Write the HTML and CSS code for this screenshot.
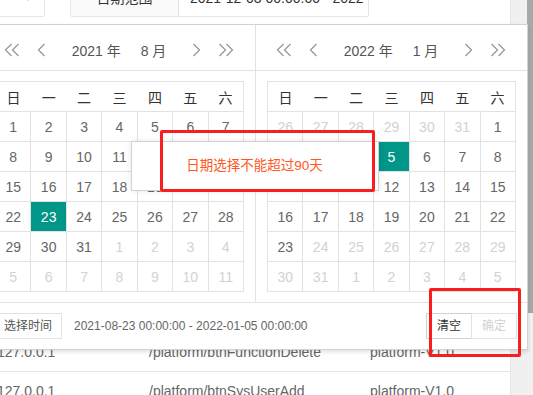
FILE: index.html
```html
<!DOCTYPE html>
<html lang="zh-CN">
<head>
    <meta charset="UTF-8">
    <title>操作日志</title>
    <link rel="stylesheet" href="styles.css">
</head>
<body>
    <div class="page">
        <div class="card">
            <div class="search">
                <div class="select"><span class="caret"></span></div>
                <div class="field">
                    <div class="field-label">日期范围</div>
                    <div class="field-input">2021-12-03 00:00:00 - 2022-01-05 00:00:00</div>
                </div>
            </div>

            <table class="log">
                <colgroup><col style="width: 152px"><col style="width: 221px"><col></colgroup>
                <tr><td>IP地址</td><td>请求地址</td><td>服务</td></tr>
                <tr><td>127.0.0.1</td><td>/platform/btnSysRoleEdit</td><td>platform-V1.0</td></tr>
                <tr><td>127.0.0.1</td><td>/platform/btnSysRoleAdd</td><td>platform-V1.0</td></tr>
                <tr><td>127.0.0.1</td><td>/platform/btnMenuEdit</td><td>platform-V1.0</td></tr>
                <tr><td>127.0.0.1</td><td>/platform/btnMenuAdd</td><td>platform-V1.0</td></tr>
                <tr><td>127.0.0.1</td><td>/platform/btnFunctionEdit</td><td>platform-V1.0</td></tr>
                <tr><td>127.0.0.1</td><td>/platform/btnFunctionAdd</td><td>platform-V1.0</td></tr>
                <tr><td>127.0.0.1</td><td>/platform/btnFunctionDelete</td><td>platform-V1.0</td></tr>
                <tr><td>127.0.0.1</td><td>/platform/btnSysUserAdd</td><td>platform-V1.0</td></tr>
            </table>
        </div>
        <div class="gutter"></div>
        <div class="scrollbar"><div class="thumb"></div></div>
    </div>

    <!-- date range picker -->
    <div class="laydate">
        <div class="laydate-mains">
            <div class="laydate-main">
                <div class="laydate-header">
                    <svg class="arrow" width="16" height="14" viewBox="0 0 16 14"><path d="M7.5 1 L1.5 7 L7.5 13 M14.5 1 L8.5 7 L14.5 13"/></svg>
                    <svg class="arrow arrow-m" width="9" height="14" viewBox="0 0 9 14"><path d="M7.5 1 L1.5 7 L7.5 13"/></svg>
                    <div class="laydate-title"><span>2021 年</span><span>8 月</span></div>
                    <svg class="arrow" width="9" height="14" viewBox="0 0 9 14"><path d="M1.5 1 L7.5 7 L1.5 13"/></svg>
                    <svg class="arrow arrow-y" width="16" height="14" viewBox="0 0 16 14"><path d="M1.5 1 L7.5 7 L1.5 13 M8.5 1 L14.5 7 L8.5 13"/></svg>
                </div>
                <div class="laydate-content">
                    <table>
                        <tr><th>日</th><th>一</th><th>二</th><th>三</th><th>四</th><th>五</th><th>六</th></tr>
                        <tr><td>1</td><td>2</td><td>3</td><td>4</td><td>5</td><td>6</td><td>7</td></tr>
                        <tr><td>8</td><td>9</td><td>10</td><td>11</td><td>12</td><td>13</td><td>14</td></tr>
                        <tr><td>15</td><td>16</td><td>17</td><td>18</td><td>19</td><td>20</td><td>21</td></tr>
                        <tr><td>22</td><td class="on">23</td><td>24</td><td>25</td><td>26</td><td>27</td><td>28</td></tr>
                        <tr><td>29</td><td>30</td><td>31</td><td class="off">1</td><td class="off">2</td><td class="off">3</td><td class="off">4</td></tr>
                        <tr><td class="off">5</td><td class="off">6</td><td class="off">7</td><td class="off">8</td><td class="off">9</td><td class="off">10</td><td class="off">11</td></tr>
                    </table>
                </div>
            </div>
            <div class="laydate-main">
                <div class="laydate-header">
                    <svg class="arrow" width="16" height="14" viewBox="0 0 16 14"><path d="M7.5 1 L1.5 7 L7.5 13 M14.5 1 L8.5 7 L14.5 13"/></svg>
                    <svg class="arrow arrow-m" width="9" height="14" viewBox="0 0 9 14"><path d="M7.5 1 L1.5 7 L7.5 13"/></svg>
                    <div class="laydate-title"><span>2022 年</span><span>1 月</span></div>
                    <svg class="arrow" width="9" height="14" viewBox="0 0 9 14"><path d="M1.5 1 L7.5 7 L1.5 13"/></svg>
                    <svg class="arrow arrow-y" width="16" height="14" viewBox="0 0 16 14"><path d="M1.5 1 L7.5 7 L1.5 13 M8.5 1 L14.5 7 L8.5 13"/></svg>
                </div>
                <div class="laydate-content">
                    <table>
                        <tr><th>日</th><th>一</th><th>二</th><th>三</th><th>四</th><th>五</th><th>六</th></tr>
                        <tr><td class="off">26</td><td class="off">27</td><td class="off">28</td><td class="off">29</td><td class="off">30</td><td class="off">31</td><td>1</td></tr>
                        <tr><td>2</td><td>3</td><td>4</td><td class="on">5</td><td>6</td><td>7</td><td>8</td></tr>
                        <tr><td>9</td><td>10</td><td>11</td><td>12</td><td>13</td><td>14</td><td>15</td></tr>
                        <tr><td>16</td><td>17</td><td>18</td><td>19</td><td>20</td><td>21</td><td>22</td></tr>
                        <tr><td>23</td><td class="off">24</td><td class="off">25</td><td class="off">26</td><td class="off">27</td><td class="off">28</td><td class="off">29</td></tr>
                        <tr><td class="off">30</td><td class="off">31</td><td class="off">1</td><td class="off">2</td><td class="off">3</td><td class="off">4</td><td class="off">5</td></tr>
                    </table>
                </div>
            </div>
        </div>
        <div class="laydate-footer">
            <span class="btn btn-time">选择时间</span>
            <span class="range">2021-08-23 00:00:00 - 2022-01-05 00:00:00</span>
            <div class="btns">
                <span class="btn">清空</span>
                <span class="btn btn-disabled">确定</span>
            </div>
        </div>
        <div class="laydate-hint">日期选择不能超过90天</div>
    </div>

    <div class="mark mark-hint"></div>
    <div class="mark mark-btns"></div>
</body>
</html>
```

FILE: styles.css
```css
body {
    margin: 0;
    width: 533px;
    height: 395px;
    overflow: hidden;
    font-family: "Liberation Sans", "Noto Sans CJK SC", sans-serif;
    font-size: 14px;
    color: #666;
    background: #fff;
}
.page {
    display: flex;
    height: 395px;
}
.card {
    flex: none;
    width: 528px;
    margin-left: -18px;
    border-right: 1px solid #e6e6e6;
}
.gutter {
    flex: 1;
    background: #f0f0f0;
}
.scrollbar {
    width: 6px;
    background: #f1f1f1;
}
.thumb {
    height: 313px;
    background: #a8a8a8;
}

/* search form, scrolled mostly out of view */
.search {
    display: flex;
    margin-top: -21px;
    height: 38px;
}
.select {
    display: flex;
    align-items: center;
    justify-content: flex-end;
    width: 63px;
    padding-right: 10px;
    box-sizing: border-box;
    border: 1px solid #e6e6e6;
    border-radius: 2px;
}
.caret {
    width: 0;
    height: 0;
    border-left: 6px solid transparent;
    border-right: 6px solid transparent;
    border-top: 6px solid #c2c2c2;
}
.field {
    display: flex;
    margin-left: 25px;
}
.field-label {
    width: 109px;
    box-sizing: border-box;
    padding: 8px 0;
    line-height: 20px;
    text-align: center;
    color: #333;
    background: #fafafa;
    border: 1px solid #e6e6e6;
    border-radius: 2px 0 0 2px;
}
.field-input {
    width: 190px;
    box-sizing: border-box;
    padding: 8px 11px;
    line-height: 20px;
    color: #333;
    white-space: nowrap;
    overflow: hidden;
    border: 1px solid #e6e6e6;
    border-left: 0;
    border-radius: 0 2px 2px 0;
}

.log {
    margin-top: 43px;
    width: 528px;
    border-collapse: collapse;
    table-layout: fixed;
}
.log td {
    padding: 9px 15px;
    line-height: 20px;
    white-space: nowrap;
    overflow: hidden;
    border-bottom: 1px solid #e6e6e6;
}

/* laydate range popup */
.laydate {
    position: absolute;
    top: 24px;
    left: -17px;
    width: 543px;
    background: #fff;
    border: 1px solid #d2d2d2;
    box-shadow: 0 2px 4px rgba(0, 0, 0, .12);
}
.laydate-mains {
    display: flex;
}
.laydate-main {
    width: 271px;
}
.laydate-main + .laydate-main {
    border-left: 1px solid #e2e2e2;
}
.laydate-header {
    display: flex;
    align-items: center;
    height: 30px;
    padding: 10px 21px 5px 20px;
    border-bottom: 1px solid #e2e2e2;
    color: #555;
}
.arrow {
    flex: none;
    fill: none;
    stroke: #999;
    stroke-width: 1.3;
}
.arrow-m {
    margin-left: 17px;
}
.arrow-y {
    margin-left: 17px;
}
.laydate-title {
    flex: 1;
    display: flex;
    justify-content: center;
    gap: 20px;
    white-space: nowrap;
}
.laydate-content {
    padding: 10px 11px;
}
.laydate-content table {
    width: 100%;
    border-collapse: collapse;
    table-layout: fixed;
    border: 1px solid #e2e2e2;
}
.laydate-content th {
    height: 29px;
    padding: 0;
    font-weight: normal;
    color: #333;
}
.laydate-content td {
    height: 29px;
    padding: 0;
    text-align: center;
    border: 1px solid #e2e2e2;
}
.laydate-content td.off {
    color: #d2d2d2;
}
.laydate-content td.on {
    background: #009688;
    color: #fff;
}
.laydate-footer {
    display: flex;
    align-items: center;
    height: 26px;
    padding: 10px;
    border-top: 1px solid #e2e2e2;
    font-size: 12px;
}
.btn {
    height: 26px;
    box-sizing: border-box;
    padding: 0 10px;
    line-height: 24px;
    color: #333;
    background: #fff;
    border: 1px solid #d2d2d2;
}
.btn-time {
    padding: 0 9px;
    color: #555;
    border-color: #e2e2e2;
}
.range {
    margin-left: 12px;
    color: #666;
}
.btns {
    display: flex;
    margin-left: auto;
}
.btns .btn + .btn {
    margin-left: -1px;
}
.btn-disabled {
    color: #d2d2d2;
    border-color: #e2e2e2;
}
.laydate-hint {
    position: absolute;
    top: 116px;
    left: calc(50% - 125px);
    width: 248px;
    box-sizing: border-box;
    padding: 14px;
    line-height: 20px;
    text-align: center;
    font-size: 13.5px;
    color: #ff5722;
    background: #fff;
    border: 1px solid #d2d2d2;
    box-shadow: 0 0 5px rgba(0, 0, 0, .1);
}

/* red annotation boxes */
.mark {
    position: absolute;
    box-sizing: border-box;
    border: 3px solid #f91e1e;
    border-radius: 2px;
}
.mark-hint {
    left: 160px;
    top: 130px;
    width: 215px;
    height: 62px;
}
.mark-btns {
    left: 429px;
    top: 288px;
    width: 92px;
    height: 69px;
}
```
